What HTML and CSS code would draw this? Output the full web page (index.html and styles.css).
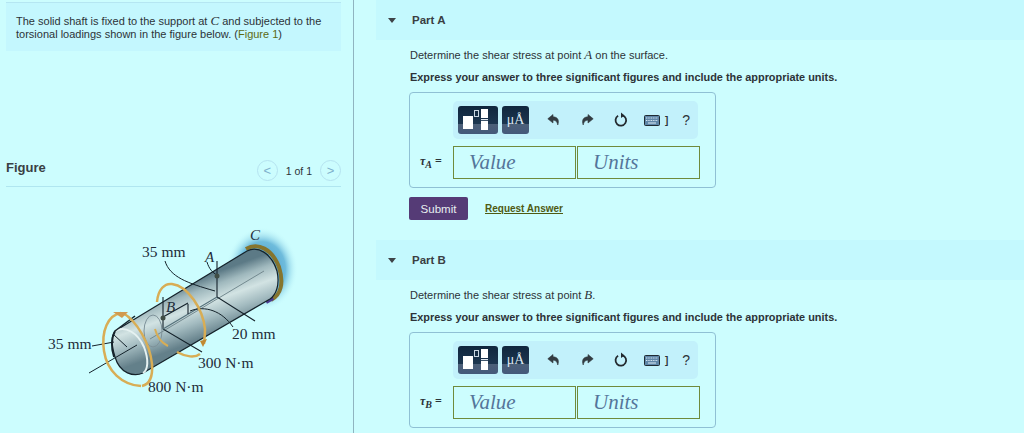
FILE: index.html
```html
<!DOCTYPE html>
<html lang="en">
<head>
    <meta charset="UTF-8">
    <title>Part A and B</title>
    <link rel="stylesheet" href="styles.css">
</head>
<body>
<svg class="icon-defs">
    <symbol id="i-template" viewBox="0 0 40 28">
        <rect x="5" y="10" width="10" height="13" fill="#fff"/>
        <rect x="16.5" y="4.5" width="4" height="6" fill="none" stroke="#c9d6e2"/>
        <rect x="23" y="3" width="7" height="9" fill="#fff"/>
        <rect x="23" y="13" width="7" height="1.2" fill="#dfe8f0"/>
        <rect x="23" y="15" width="7" height="9" fill="#fff"/>
    </symbol>
    <symbol id="i-undo" viewBox="0 0 14 14">
        <path d="M6 1.5 0.8 5.8 6 10V7.2c2.6 0 4 1.2 4.8 4.8 1.600-4.600 0.200-8-4.800-8.200z" fill="#333c42" stroke="#333c42" stroke-width=".6"/>
    </symbol>
    <symbol id="i-redo" viewBox="0 0 14 14">
        <path d="M8 1.5 13.2 5.8 8 10V7.2c-2.6 0-4 1.2-4.8 4.8C1.600 7.400 3 4 8 3.800z" fill="#333c42" stroke="#333c42" stroke-width=".6"/>
    </symbol>
    <symbol id="i-reset" viewBox="0 0 16 16">
        <path d="M9.500 3.300a5.300 5.300 0 1 1-4.400 0.500" fill="none" stroke="#22292e" stroke-width="1.800"/>
        <path d="M8 0.500 11.500 3.500 8 6z" fill="#22292e"/>
    </symbol>
    <symbol id="i-keyboard" viewBox="0 0 16 11">
        <rect x="0.500" y="0.500" width="15" height="10" rx="1" fill="#5f86a8" stroke="#1f2a33"/>
        <path d="M2 3h12M2 5.500h12" stroke="#dceaf5" stroke-dasharray="1 .7"/>
        <path d="M4 8h8" stroke="#dceaf5"/>
    </symbol>
</svg>

<div class="page">
    <!-- Left column: problem and figure -->
    <div class="problem">
        <div class="intro">
            <p>The solid shaft is fixed to the support at <i class="math">C</i> and subjected to the torsional loadings shown in the figure below. (<a href="#" class="fig-link">Figure 1</a>)</p>
        </div>
        <div class="figure-head">
            <h3>Figure</h3>
            <div class="pager">
                <span class="pager-btn">&lt;</span>
                <span class="pager-text">1 of 1</span>
                <span class="pager-btn">&gt;</span>
            </div>
        </div>
        <svg class="shaft" viewBox="0 188 353 245" width="353" height="245">
            <defs>
                <linearGradient id="shaftFill" gradientUnits="userSpaceOnUse" x1="190" y1="283" x2="210" y2="337">
                    <stop offset="0" stop-color="#5c7a86"/>
                    <stop offset="0.2" stop-color="#9fb8bd"/>
                    <stop offset="0.45" stop-color="#d2e3e3"/>
                    <stop offset="0.7" stop-color="#a3bbc0"/>
                    <stop offset="1" stop-color="#64808a"/>
                </linearGradient>
                <radialGradient id="glow">
                    <stop offset="0" stop-color="#3b94c6"/>
                    <stop offset="0.65" stop-color="#6fbcdc"/>
                    <stop offset="1" stop-color="#ccfdfe" stop-opacity="0"/>
                </radialGradient>
                <filter id="soft"><feGaussianBlur stdDeviation="0.4"/></filter>
            </defs>
            <ellipse cx="262" cy="270" rx="36" ry="42" fill="url(#glow)"/>
            <g filter="url(#soft)">
                <!-- support ring -->
                <path d="M246 250C258 243 272 250 279 268 284 284 281 296 271 301" fill="none" stroke="#86742e" stroke-width="4"/>
                <path d="M266 303 273 299" stroke="#4a3a90" stroke-width="4"/>
                <!-- body -->
                <path d="M115 332 247 252C258 246 272 255 277 272 280 286 276 296 270 300L143 374C134 378 120 375 115 358 111 345 111 337 115 332z" fill="url(#shaftFill)" stroke="#14222a" stroke-width="1.200"/>
                <!-- near end -->
                <path d="M115 332C125 326 138 334 144 348 149 361 148 371 143 374" fill="none" stroke="#e6f2f2" stroke-width="2"/>
                <path d="M135 317 115 332" stroke="#14222a" stroke-width="1.500"/>
                <path d="M115 332C112 338 110 346 114 358" fill="none" stroke="#14222a" stroke-width="1.800"/>
                <!-- axis and dimension lines -->
                <path d="M89 374 137 346" stroke="#14222a" stroke-width="1"/>
                <path d="M150 340 264 272" stroke="#73898f" stroke-width="1"/>
                <path d="M92 347 114 343M113 335 127 348" fill="none" stroke="#14222a" stroke-width="1"/>
                <path d="M217 262V298L255 322" fill="none" stroke="#14222a" stroke-width="1.100"/>
                <path d="M163 298V330L202 353" fill="none" stroke="#14222a" stroke-width="1.100"/>
                <path d="M163 330 217 298" stroke="#54707a" stroke-width="1.100"/>
                <path d="M163 318 188 304M188 305V315" fill="none" stroke="#14222a" stroke-width="1.100"/>
                <path d="M165 262C170 278 187 284 215 292" fill="none" stroke="#14222a" stroke-width="1"/>
                <path d="M190 312C205 306 222 312 233 328" fill="none" stroke="#14222a" stroke-width="1"/>
                <path d="M207 263C209 270 213 274 217 276" fill="none" stroke="#14222a" stroke-width="1"/>
                <circle cx="217" cy="277" r="2.500" fill="#3f4e45"/>
                <circle cx="163" cy="319" r="2.500" fill="#3f4e45"/>
                <ellipse cx="153" cy="332" rx="9" ry="16" fill="none" stroke="#7e929a" stroke-width="1"/>
                <!-- torque arrows -->
                <path d="M157 303C158 290 165 284 172 285 188 287 203 310 205 330 205 338 204 342 204 345" fill="none" stroke="#d8ad55" stroke-width="2.500"/>
                <path d="M177 353C186 358 195 359 200 355" fill="none" stroke="#d8ad55" stroke-width="2.500"/>
                <path d="M155 330C157 338 162 344 168 347" fill="none" stroke="#d8ad55" stroke-width="2"/>
                <path d="M200 342 207 340 203 348z" fill="#c08a32"/>
                <path d="M121 314C108 316 101 332 104 352 107 372 122 386 141 387" fill="none" stroke="#d8ad55" stroke-width="2.500"/>
                <path d="M123 314C137 322 150 345 152 365 153 378 150 385 142 387" fill="none" stroke="#d8ad55" stroke-width="2.500"/>
                <path d="M113 313 128 313 122 319z" fill="#d09a50"/>
            </g>
            <g class="fig-label">
                <text x="142" y="258">35 mm</text>
                <text x="48" y="350">35 mm</text>
                <text x="232" y="340">20 mm</text>
                <text x="198" y="369">300 N·m</text>
                <text x="148" y="393">800 N·m</text>
            </g>
            <g class="fig-point">
                <text x="250" y="241">C</text>
                <text x="205" y="263">A</text>
                <text x="166" y="313">B</text>
            </g>
        </svg>
    </div>

    <!-- Right column: answer parts -->
    <div class="parts">
        <section class="part part-a">
            <div class="part-head"><span class="caret"></span><span class="part-title">Part A</span></div>
            <div class="part-body">
                <p class="question">Determine the shear stress at point <i class="math">A</i> on the surface.</p>
                <p class="instruction">Express your answer to three significant figures and include the appropriate units.</p>
                <div class="answer-box">
                    <div class="toolbar">
                        <span class="tool-btn tool-template"><svg width="40" height="28"><use href="#i-template"/></svg></span>
                        <span class="tool-btn tool-units">μÅ</span>
                        <span class="tool-icons">
                            <svg width="14" height="14"><use href="#i-undo"/></svg>
                            <svg width="14" height="14"><use href="#i-redo"/></svg>
                            <svg width="16" height="16"><use href="#i-reset"/></svg>
                            <span class="kbd"><svg width="16" height="11"><use href="#i-keyboard"/></svg><b>]</b></span>
                            <span class="help">?</span>
                        </span>
                    </div>
                    <div class="answer-row">
                        <span class="symbol"><i>τ<sub>A</sub></i> =</span>
                        <span class="field">Value</span>
                        <span class="field">Units</span>
                    </div>
                </div>
                <div class="actions">
                    <button class="submit">Submit</button>
                    <a href="#" class="request">Request Answer</a>
                </div>
            </div>
        </section>
        <section class="part part-b">
            <div class="part-head"><span class="caret"></span><span class="part-title">Part B</span></div>
            <div class="part-body">
                <p class="question">Determine the shear stress at point <i class="math">B</i>.</p>
                <p class="instruction">Express your answer to three significant figures and include the appropriate units.</p>
                <div class="answer-box">
                    <div class="toolbar">
                        <span class="tool-btn tool-template"><svg width="40" height="28"><use href="#i-template"/></svg></span>
                        <span class="tool-btn tool-units">μÅ</span>
                        <span class="tool-icons">
                            <svg width="14" height="14"><use href="#i-undo"/></svg>
                            <svg width="14" height="14"><use href="#i-redo"/></svg>
                            <svg width="16" height="16"><use href="#i-reset"/></svg>
                            <span class="kbd"><svg width="16" height="11"><use href="#i-keyboard"/></svg><b>]</b></span>
                            <span class="help">?</span>
                        </span>
                    </div>
                    <div class="answer-row">
                        <span class="symbol"><i>τ<sub>B</sub></i> =</span>
                        <span class="field">Value</span>
                        <span class="field">Units</span>
                    </div>
                </div>
            </div>
        </section>
    </div>
</div>
</body>
</html>
```

FILE: styles.css
```css
/* General reset */
* {
    margin: 0;
    padding: 0;
    box-sizing: border-box;
}

html, body {
    height: 433px;
    overflow: hidden;
}

body {
    font-family: "Liberation Sans", Arial, sans-serif;
    background: #ccfdfe;
    color: #2c3338;
}

.icon-defs {
    display: none;
}

.page {
    display: flex;
    height: 433px;
}

/* Left column */
.problem {
    width: 354px;
    height: 433px;
    border-right: 1px solid #8fb4c0;
}

.intro {
    margin: 2px 12px 0 6px;
    height: 49px;
    padding: 11px 10px 0;
    background: #c4f7fe;
    border-top: 1px solid #b5e6f2;
    font-size: 11px;
    line-height: 13px;
}

.math {
    font-family: "Liberation Serif", serif;
    font-size: 13px;
}

.fig-link {
    color: #5d6a12;
    text-decoration: none;
}

.figure-head {
    margin: 107px 12px 0 6px;
    height: 29px;
    padding-bottom: 8px;
    border-bottom: 1px solid #b0e6f0;
    display: flex;
    justify-content: space-between;
    align-items: center;
}

.figure-head h3 {
    margin-bottom: 2px;
    font-size: 13px;
    font-weight: bold;
    color: #3a3f44;
}

.pager {
    display: flex;
    align-items: center;
    gap: 8px;
    margin-top: 5px;
    font-size: 10.500px;
}

.pager-btn {
    width: 21px;
    height: 21px;
    border: 1px solid #b5e3f0;
    border-radius: 50%;
    display: flex;
    align-items: center;
    justify-content: center;
    color: #7fb0cc;
    font-size: 13px;
}

.shaft {
    display: block;
}

.fig-label text {
    font-family: "Liberation Serif", serif;
    font-size: 15.500px;
    fill: #1f2d3a;
}

.fig-point text {
    font-family: "Liberation Serif", serif;
    font-style: italic;
    font-size: 15px;
    fill: #1f2d3a;
}

/* Right column */
.parts {
    flex: 1;
    padding-left: 22px;
}

.part-a {
    height: 240px;
}

.part-head {
    height: 40px;
    background: #c4f9fe;
    display: flex;
    align-items: center;
    padding-left: 12px;
}

.caret {
    width: 0;
    height: 0;
    border-left: 4px solid transparent;
    border-right: 4px solid transparent;
    border-top: 5px solid #3d4347;
}

.part-title {
    margin-left: 16px;
    font-size: 11.500px;
    font-weight: bold;
    color: #3a3f44;
}

.part-body {
    padding-left: 33px;
}

.question {
    margin-top: 8px;
    padding-left: 1px;
    font-size: 11px;
    line-height: 13px;
}

.instruction {
    margin-top: 9px;
    padding-left: 1px;
    font-size: 10.900px;
    line-height: 13px;
    font-weight: bold;
}

.answer-box {
    margin-top: 8px;
    width: 307px;
    height: 96px;
    padding: 8px 15px 0 43px;
    border: 1px solid #8fc0d4;
    border-radius: 4px;
}

.toolbar {
    width: 245px;
    height: 38px;
    padding: 5px;
    background: #c2f1fb;
    border-radius: 5px;
    display: flex;
    gap: 4px;
}

.tool-btn {
    height: 28px;
    border-radius: 3px;
    background: linear-gradient(#10263d 0, #1c3650 64%, #4c6079 66%, #44587a 100%);
    color: #dfe9f2;
    display: flex;
    align-items: center;
    justify-content: center;
}

.tool-template {
    width: 40px;
}

.tool-units {
    width: 27px;
    font-family: "Liberation Serif", serif;
    font-size: 14px;
}

.tool-icons {
    flex: 1;
    display: flex;
    align-items: center;
    padding-left: 14px;
    gap: 19px;
}

.kbd {
    display: flex;
    align-items: center;
    gap: 5px;
    margin-left: -4px;
    font-size: 10px;
}

.help {
    margin-left: -5px;
    font-size: 14px;
    color: #2c3338;
}

.answer-row {
    margin: 7px 0 0 -33px;
    display: flex;
    align-items: center;
}

.symbol {
    flex: none;
    width: 33px;
    font-family: "Liberation Serif", serif;
    font-size: 12px;
    font-weight: bold;
}

.symbol sub {
    font-size: 10px;
}

.field {
    flex: none;
    width: 123px;
    height: 33px;
    border: 1px solid #6f8a3c;
    padding-left: 15px;
    margin-right: 1px;
    font-family: "Liberation Serif", serif;
    font-style: italic;
    font-size: 21px;
    line-height: 30px;
    color: #54759a;
}

.actions {
    margin-top: 9px;
    display: flex;
    align-items: center;
    gap: 17px;
}

.submit {
    width: 59px;
    height: 23px;
    background: #553b76;
    color: #e6eef0;
    border: none;
    border-radius: 2px;
    font-family: "Liberation Sans", Arial, sans-serif;
    font-size: 11.500px;
}

.request {
    color: #4f5a12;
    font-size: 10px;
    font-weight: bold;
}
```
